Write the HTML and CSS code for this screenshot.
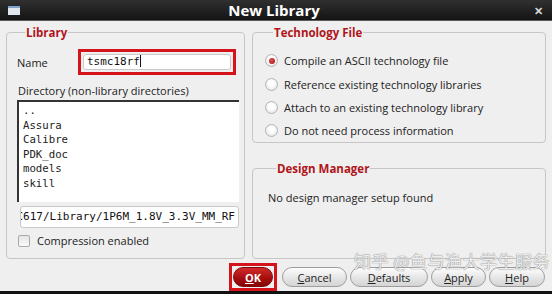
FILE: index.html
```html
<!DOCTYPE html>
<html lang="en">
<head>
    <meta charset="UTF-8">
    <title>New Library</title>
    <link rel="stylesheet" href="styles.css">
</head>
<body>
    <div class="window">
        <div class="titlebar">
            <span class="win-icon"></span>
            <span class="title">New Library</span>
            <span class="close">&#x2715;</span>
        </div>
        <div class="main">
            <fieldset class="group library">
                <legend>Library</legend>
                <div class="name-row">
                    <span class="label">Name</span>
                    <div class="mark">
                        <div class="textbox name-box">tsmc18rf<span class="caret"></span></div>
                    </div>
                </div>
                <div class="dir-label">Directory (non-library directories)</div>
                <div class="listbox">
                    <div>..</div>
                    <div>Assura</div>
                    <div>Calibre</div>
                    <div>PDK_doc</div>
                    <div>models</div>
                    <div>skill</div>
                </div>
                <div class="textbox path-box"><span>IC617/Library/1P6M_1.8V_3.3V_MM_RF</span></div>
                <label class="check-row"><span class="checkbox"></span>Compression enabled</label>
            </fieldset>
            <div class="right-col">
                <fieldset class="group tech">
                    <legend>Technology File</legend>
                    <div class="radio-row"><span class="radio on"></span>Compile an ASCII technology file</div>
                    <div class="radio-row"><span class="radio"></span>Reference existing technology libraries</div>
                    <div class="radio-row"><span class="radio"></span>Attach to an existing technology library</div>
                    <div class="radio-row"><span class="radio"></span>Do not need process information</div>
                </fieldset>
                <fieldset class="group dm">
                    <legend>Design Manager</legend>
                    <div class="dm-text">No design manager setup found</div>
                </fieldset>
            </div>
        </div>
        <div class="buttons">
            <div class="mark ok-mark"><button class="btn ok"><u>O</u>K</button></div>
            <button class="btn cancel"><u>C</u>ancel</button>
            <button class="btn defaults"><u>D</u>efaults</button>
            <button class="btn apply"><u>A</u>pply</button>
            <button class="btn help"><u>H</u>elp</button>
            <span class="watermark">知乎 @鱼与渔大学生服务</span>
        </div>
        <div class="bottom-strip"></div>
    </div>
</body>
</html>
```

FILE: styles.css
```css
body { margin: 0; padding: 0; background: #efefef; font-family: "Open Sans", "Noto Sans", sans-serif; font-size: 11px; color: #222; }
.window { width: 552px; height: 294px; display: flex; flex-direction: column; overflow: hidden; }

.titlebar { height: 20px; flex: none; background: linear-gradient(#303030, #141414); border-bottom: 1px solid #5a5a5a; display: flex; align-items: center; position: relative; }
.win-icon { width: 12px; height: 9px; margin-left: 8px; background: #dfe6ee; border-top: 2px solid #7fa3c8; box-sizing: border-box; }
.title { flex: 1; text-align: center; color: #fff; font-weight: bold; font-size: 15px; font-family: "Open Sans", sans-serif; margin-left: -6px; }
.close { color: #d8d8d8; font-size: 11px; margin-right: 9px; font-weight: bold; }

.main { display: flex; gap: 7px; padding: 4px 6px 0 6px; height: 234px; flex: none; }
.group { margin: 0; min-width: 0; border: 1px solid #c6c6c6; border-radius: 4px; padding: 0; box-sizing: border-box; }
.group legend { color: #b0151b; font-weight: bold; font-size: 11.5px; padding: 0 1px; margin-left: 8px; }

.library { width: 239px; flex: none; padding: 0 5px 0 10px; }
.name-row { display: flex; align-items: center; margin-top: 9px; }
.label { width: 61px; font-size: 11px; }
.mark { border: 3px solid #d4141a; padding: 2px; }
.textbox { background: #fff; border: 1px solid #c9c9c9; border-radius: 3px; font-family: "DejaVu Sans Mono", monospace; font-size: 10.5px; color: #111; box-sizing: border-box; }
.name-box { width: 148px; height: 16px; line-height: 14px; padding-left: 3px; font-size: 11px; }
.caret { display: inline-block; width: 1px; height: 12px; background: #111; vertical-align: -2px; }
.dir-label { margin-top: 8px; margin-left: 1px; font-size: 11px; }
.listbox { margin-top: 2px; height: 102px; background: #fff; border-left: 2px solid #333; border-top: 2px solid #333; padding: 2px 0 0 4px; font-family: "DejaVu Sans Mono", monospace; font-size: 10.7px; line-height: 14.6px; box-sizing: border-box; }
.path-box { margin-top: 4px; margin-left: 3px; height: 22px; line-height: 20px; overflow: hidden; white-space: nowrap; direction: rtl; text-align: left; padding: 0 3px 0 0; font-size: 11px; }
.path-box span { direction: ltr; unicode-bidi: embed; }
.check-row { display: flex; align-items: center; margin-top: 5px; margin-left: 1px; font-size: 11px; }
.checkbox { width: 10px; height: 10px; border: 1px solid #a9a9a9; border-radius: 2px; background: linear-gradient(#e4e4e4, #fafafa); margin-right: 7px; }

.right-col { width: 294px; flex: none; display: flex; flex-direction: column; gap: 18px; }
.tech { height: 118px; padding: 9px 0 0 12px; flex: none; }
.radio-row { display: flex; align-items: center; height: 23.4px; font-size: 11px; }
.radio { width: 11px; height: 11px; border-radius: 50%; border: 1px solid #b4b4b4; background: radial-gradient(circle at 50% 40%, #fff 30%, #dcdcdc 100%); margin-right: 6px; position: relative; }
.radio.on::after { content: ""; position: absolute; left: 2.5px; top: 2.5px; width: 6px; height: 6px; border-radius: 50%; background: radial-gradient(circle at 40% 35%, #e05050, #a50d14); }
.dm { flex: 1; padding: 14px 0 0 15px; }
.dm-text { font-size: 11px; }

.buttons { flex: 1; display: flex; align-items: center; padding: 4px 0 0 229px; position: relative; }
.btn { font-family: "Open Sans", sans-serif; font-size: 11px; height: 20px; border: 1px solid #9d9d9d; border-radius: 10px; background: linear-gradient(#fdfdfd, #e3e3e3 60%, #d4d4d4); color: #222; padding: 0; margin-right: 3px; }
.ok-mark { padding: 1px; margin-right: 5px; }
.ok { width: 40px; margin: 0; background: linear-gradient(#d22a2a, #a30c0c 60%, #860707); color: #fff; font-weight: bold; border-color: #7a0a0a; }
.cancel { width: 65px; }
.defaults { width: 78px; }
.apply { width: 55px; }
.help { width: 56px; }
.watermark { position: absolute; left: 354px; top: -11px; font-family: "Noto Sans CJK SC", sans-serif; font-size: 17px; color: rgba(255, 255, 255, 0.85); text-shadow: 0 0 1px #8a8a8a, 0 0 1px #8a8a8a; letter-spacing: 0.5px; pointer-events: none; }
.bottom-strip { height: 3px; flex: none; background: #111; }
```
